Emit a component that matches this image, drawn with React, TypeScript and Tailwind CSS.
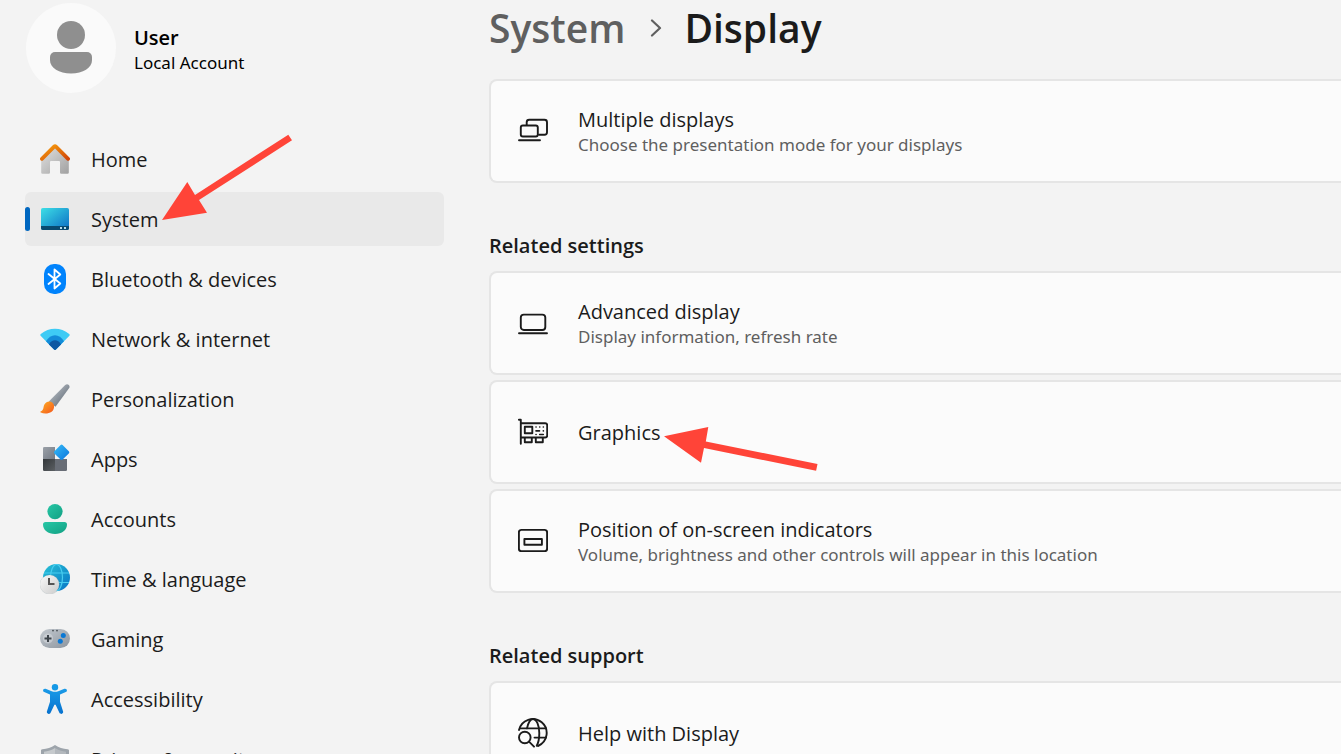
import type { ReactNode } from "react";

function HomeIcon() {
  return (
    <svg viewBox="0 0 30 30" className="size-[30px] shrink-0" aria-hidden="true">
      <defs>
        <linearGradient id="homeWall" x1="0" y1="0" x2="1" y2="1">
          <stop offset="0" stopColor="#e2e2e2" />
          <stop offset="1" stopColor="#a0a0a0" />
        </linearGradient>
        <linearGradient id="homeRoof" x1="0" y1="0" x2="1" y2="1">
          <stop offset="0" stopColor="#f8a00c" />
          <stop offset="1" stopColor="#d04408" />
        </linearGradient>
      </defs>
      <path d="M15 3 1.2 15.5v13a1.3 1.3 0 0 0 1.3 1.3h6.2A1.3 1.3 0 0 0 10 28.5V18a1 1 0 0 1 1-1h8a1 1 0 0 1 1 1v10.5a1.3 1.3 0 0 0 1.3 1.3h6.2a1.3 1.3 0 0 0 1.3-1.3v-13Z" fill="url(#homeWall)" />
      <path d="M1.9 14.8 14.1 2.7a1.3 1.3 0 0 1 1.8 0L28.1 14.8" fill="none" stroke="url(#homeRoof)" strokeWidth="3.8" strokeLinecap="round" />
    </svg>
  );
}

function SystemIcon() {
  return (
    <svg viewBox="0 0 30 30" className="size-[30px] shrink-0" aria-hidden="true">
      <defs>
        <linearGradient id="screen" x1="0" y1="0" x2="1" y2="1">
          <stop offset="0" stopColor="#3ddfe6" />
          <stop offset="1" stopColor="#0b6cc4" />
        </linearGradient>
      </defs>
      <rect x="1" y="4" width="28" height="22" rx="1.8" fill="url(#screen)" />
      <path d="M1 22h28v2.2a1.8 1.8 0 0 1-1.8 1.8H2.8A1.8 1.8 0 0 1 1 24.2Z" fill="#084a70" />
      <path d="M20 23h2v2h-2zM24 23h2v2h-2z" fill="#b8dcea" />
    </svg>
  );
}

function BluetoothIcon() {
  return (
    <svg viewBox="0 0 30 30" className="size-[30px] shrink-0" aria-hidden="true">
      <rect x="4" y="0" width="22" height="30" rx="10" fill="#0083fc" />
      <path d="M8.5 10 20.3 19.5 14.5 24.5V5.5L20.3 10.5 8.5 20" fill="none" stroke="#fff" strokeWidth="1.8" strokeLinecap="round" strokeLinejoin="round" />
    </svg>
  );
}

function NetworkIcon() {
  return (
    <svg viewBox="0 0 30 30" className="size-[30px] shrink-0" aria-hidden="true">
      <path d="M.6 11.8C.1 11.3.2 10.6.8 10.1c8.2-7.2 20.2-7.2 28.4 0 .6.5.7 1.2.2 1.7L15.9 25.6q-.9.9-1.8 0Z" fill="#3ecbf5" />
      <path d="M6 17.3c4.600-8 13.400-8 18 0l-8.100 8.300q-.9.9-1.8 0Z" fill="#138bd8" />
      <path d="M9 20.4c3-5.4 9-5.4 12 0l-5.1 5.2q-.9.9-1.8 0Z" fill="#0c57a2" />
    </svg>
  );
}

function BrushIcon() {
  return (
    <svg viewBox="0 0 30 30" className="size-[30px] shrink-0" aria-hidden="true">
      <defs>
        <linearGradient id="brushHandle" x1="0" y1="0" x2="1" y2="1">
          <stop offset=".2" stopColor="#b3b9c0" />
          <stop offset=".8" stopColor="#68727d" />
        </linearGradient>
        <linearGradient id="brushTip" x1="0" y1="0" x2="1" y2="1">
          <stop offset="0" stopColor="#fdb022" />
          <stop offset="1" stopColor="#f4561e" />
        </linearGradient>
      </defs>
      <path d="M25.2.9c2.4-1.9 5.4.5 4 3.2L15.5 22.8 8.8 17.6Z" fill="url(#brushHandle)" />
      <path d="M4.4 20.5c2-3.6 6.2-3.7 8.3-1.5 2.3 2.4 1.6 6.8-1.1 8.800-3 2.1-7.8 2.2-10.800.8-.8-.4-.5-1 .2-1.3 3-1.2 2-4.3 3.4-6.8Z" fill="url(#brushTip)" />
    </svg>
  );
}

function AppsIcon() {
  return (
    <svg viewBox="0 0 30 30" className="size-[30px] shrink-0" aria-hidden="true">
      <defs>
        <linearGradient id="appsDark" x1="0" y1="0" x2="1" y2="1">
          <stop offset="0" stopColor="#33373a" />
          <stop offset="1" stopColor="#5b5f63" />
        </linearGradient>
        <linearGradient id="appsLight" x1="0" y1="0" x2="1" y2="1">
          <stop offset="0" stopColor="#9aa0a8" />
          <stop offset="1" stopColor="#747a83" />
        </linearGradient>
        <linearGradient id="appsBlue" x1="0" y1="0" x2="1" y2="1">
          <stop offset="0" stopColor="#36bdf8" />
          <stop offset="1" stopColor="#0a74dc" />
        </linearGradient>
      </defs>
      <path d="M4.3 3H15v12H3V4.3A1.3 1.3 0 0 1 4.3 3Z" fill="url(#appsLight)" />
      <path d="M3 15h12v12H4.3A1.3 1.3 0 0 1 3 25.7Z" fill="url(#appsDark)" />
      <path d="M15 15h12v10.7a1.3 1.3 0 0 1-1.3 1.3H15Z" fill="#686d76" />
      <path d="m22.6 1 6.2 6.2q1.1 1.1 0 2.2l-6.2 6.2q-1 1-2 0l-6.2-6.2q-1.1-1.1 0-2.2L20.6 1q1-1 2 0Z" fill="url(#appsBlue)" />
    </svg>
  );
}

function AccountsIcon() {
  return (
    <svg viewBox="0 0 30 30" className="size-[30px] shrink-0" aria-hidden="true">
      <defs>
        <linearGradient id="person" x1="0" y1="0" x2="1" y2="1">
          <stop offset="0" stopColor="#27c7a6" />
          <stop offset="1" stopColor="#12a083" />
        </linearGradient>
      </defs>
      <circle cx="15" cy="7.6" r="7.6" fill="url(#person)" />
      <path d="M5.5 18h19a2.5 2.5 0 0 1 2.5 2.5C27 26 22 30 15 30S3 26 3 20.5A2.5 2.5 0 0 1 5.5 18Z" fill="url(#person)" />
    </svg>
  );
}

function TimeIcon() {
  return (
    <svg viewBox="0 0 30 30" className="size-[30px] shrink-0" aria-hidden="true">
      <defs>
        <linearGradient id="globe" x1="0" y1="0" x2="1" y2="1">
          <stop offset="0" stopColor="#29c3d6" />
          <stop offset="1" stopColor="#0673c5" />
        </linearGradient>
        <linearGradient id="clock" x1="0" y1="0" x2="1" y2="1">
          <stop offset="0" stopColor="#fafafa" />
          <stop offset="1" stopColor="#cbcbcb" />
        </linearGradient>
      </defs>
      <circle cx="16.5" cy="13.5" r="13.5" fill="url(#globe)" />
      <g fill="none" stroke="#48cdf0" strokeWidth="1.2">
        <ellipse cx="16.5" cy="13.5" rx="6" ry="13.2" />
        <path d="M4 9h25M4 18.5h25" />
      </g>
      <circle cx="9.7" cy="20.5" r="10" fill="#8b9aa0" opacity=".35" />
      <circle cx="9.6" cy="20.4" r="9.5" fill="url(#clock)" />
      <path d="M9 14v6h5.5" fill="none" stroke="#555" strokeWidth="2" />
    </svg>
  );
}

function GamingIcon() {
  return (
    <svg viewBox="0 0 30 30" className="size-[30px] shrink-0" aria-hidden="true">
      <defs>
        <linearGradient id="pad" x1="0" y1="0" x2="1" y2="1">
          <stop offset="0" stopColor="#c3c9cf" />
          <stop offset="1" stopColor="#8d959e" />
        </linearGradient>
      </defs>
      <rect x="0" y="5" width="30" height="19" rx="9.5" fill="url(#pad)" />
      <circle cx="8" cy="14.4" r="5" fill="#d5d9dd" opacity=".6" />
      <path d="M8 10.9v7M4.5 14.4h7" stroke="#3e454b" strokeWidth="2" />
      <circle cx="13" cy="6.6" r=".9" fill="#454b51" />
      <circle cx="17" cy="6.6" r=".9" fill="#454b51" />
      <circle cx="23.3" cy="11.4" r="2.5" fill="#0a78d4" />
      <circle cx="20.3" cy="17.3" r="2.5" fill="#0a78d4" />
    </svg>
  );
}

function AccessibilityIcon() {
  return (
    <svg viewBox="0 0 30 30" className="size-[30px] shrink-0" aria-hidden="true">
      <defs>
        <linearGradient id="figure" x1="0" y1="0" x2="0" y2="1">
          <stop offset="0" stopColor="#1a9be8" />
          <stop offset="1" stopColor="#0671ce" />
        </linearGradient>
      </defs>
      <circle cx="15" cy="3.2" r="3.2" fill="#1599e6" />
      <path d="M5.6 4.8 11.7 7.2q3.3 1.1 6.6 0L24.4 4.8c2.3-.8 3.6 2.2 1.4 3.2L20 10.5v7.2l3.1 9.8c.6 2.3-2.7 3.4-3.7 1.2L15.7 21q-.7-1.2-1.4 0l-3.7 7.7c-1 2.2-4.3 1.1-3.7-1.2L10 17.7v-7.2L4.2 8C2 7 3.3 4 5.6 4.8Z" fill="url(#figure)" />
    </svg>
  );
}

function PrivacyIcon() {
  return (
    <svg viewBox="0 0 30 30" className="size-[30px] shrink-0" aria-hidden="true">
      <path d="M15 1c3.8 2.8 8 4 12.6 4.2.8 0 1.4.6 1.4 1.4V15c0 7-5 12-14 15C6 27 1 22 1 15V6.6c0-.8.6-1.4 1.4-1.4C7 5 11.2 3.8 15 1Z" fill="#9da4ab" />
      <path d="M15 4c3.3 2.2 7 3.4 11 3.8V15c0 5.5-4 9.5-11 12Z" fill="#b3b8bd" />
      <path d="M15 4C11.7 6.2 8 7.4 4 7.8V15c0 5.5 4 9.5 11 12Z" fill="#c6cacd" />
    </svg>
  );
}

// outline icons used inside the cards
function LineIcon({ children }: { children: ReactNode }) {
  return (
    <svg
      viewBox="0 0 30 30"
      className="size-[30px] shrink-0"
      fill="none"
      stroke="#1b1b1b"
      strokeWidth="1.9"
      strokeLinecap="round"
      strokeLinejoin="round"
      aria-hidden="true"
    >
      {children}
    </svg>
  );
}

function MultipleDisplaysIcon() {
  return (
    <LineIcon>
      <path d="M8.7 9V6.3a2.5 2.5 0 0 1 2.5-2.5h15.3A2.5 2.5 0 0 1 29 6.3v9.9a2.5 2.5 0 0 1-2.5 2.5H21" />
      <rect x="2.8" y="9.5" width="17" height="11" rx="2" />
      <path d="M1 24.3h21" />
    </LineIcon>
  );
}

function LaptopIcon() {
  return (
    <LineIcon>
      <rect x="2.8" y="6.6" width="24.5" height="15.4" rx="3" />
      <path d="M1 25.2h28" />
    </LineIcon>
  );
}

function GraphicsIcon() {
  return (
    <LineIcon>
      <path d="M.9 2.7h1.9v24M2.8 6.3h24.4a2 2 0 0 1 2 2v10.2a2 2 0 0 1-2 2H2.8" />
      <rect x="6.8" y="9.8" width="7.5" height="6.5" />
      <path d="M6.8 21v4.3h7V21M17.8 21v4.3h7V21" />
      <path d="M18 10h.1M21.7 10h.1M25.3 10h.1M18 13.9h3.5M25.3 13.9h.1M18 17.5h.1M21.7 17.5h3.6" strokeWidth="1.6" />
    </LineIcon>
  );
}

function IndicatorsIcon() {
  return (
    <LineIcon>
      <rect x=".9" y="3.9" width="28.2" height="21.2" rx="2.5" />
      <rect x="6.4" y="13" width="17.5" height="5.8" />
    </LineIcon>
  );
}

function HelpIcon() {
  return (
    <LineIcon>
      <path d="M1 12A14 14 0 1 1 20 28" />
      <path d="M2 10.4h26M16.5 19.6h11.5" />
      <path d="M9 10.4C10.3 4.5 12.5 1 15 1c3.5 0 6.3 6.5 6.3 14 0 5.5-1 10-2.6 12.7" />
      <circle cx="6.8" cy="19.5" r="5.8" />
      <path d="m11 23.7 5 5" />
    </LineIcon>
  );
}

const navItems = [
  { label: "Home", icon: <HomeIcon /> },
  { label: "System", icon: <SystemIcon />, active: true },
  { label: "Bluetooth & devices", icon: <BluetoothIcon /> },
  { label: "Network & internet", icon: <NetworkIcon /> },
  { label: "Personalization", icon: <BrushIcon /> },
  { label: "Apps", icon: <AppsIcon /> },
  { label: "Accounts", icon: <AccountsIcon /> },
  { label: "Time & language", icon: <TimeIcon /> },
  { label: "Gaming", icon: <GamingIcon /> },
  { label: "Accessibility", icon: <AccessibilityIcon /> },
  { label: "Privacy & security", icon: <PrivacyIcon /> },
];

function Sidebar() {
  return (
    <aside className="w-[419px] shrink-0">
      <button type="button" className="mt-[3px] ml-px flex items-center gap-[18px] text-left text-black">
        <svg viewBox="0 0 90 90" className="size-[90px]" aria-hidden="true">
          <circle cx="45" cy="45" r="45" fill="#fafafa" />
          <circle cx="45" cy="32" r="14" fill="#8f8f8f" />
          <path d="M29 49h32a5 5 0 0 1 5 5v3c0 8-9 13.5-21 13.5S24 65 24 57v-3a5 5 0 0 1 5-5Z" fill="#8f8f8f" />
        </svg>
        <span className="flex flex-col pt-1">
          <span className="text-[20px] leading-[26px] font-semibold">User</span>
          <span className="font-['Noto_Sans',sans-serif] text-[17px] leading-[24px]">Local Account</span>
        </span>
      </button>

      <nav className="mt-[39px] flex flex-col gap-[6px]">
        {navItems.map((item) => (
          <a
            key={item.label}
            href="#"
            aria-current={item.active ? "page" : undefined}
            className={
              item.active
                ? "relative flex h-[54px] items-center gap-[21px] rounded-md bg-[#e9e9e9] pl-[15px]"
                : "flex h-[54px] items-center gap-[21px] rounded-md pl-[15px]"
            }
          >
            {item.active && (
              <span className="absolute top-[15px] left-0 h-6 w-[5px] rounded-full bg-[#0067c0]" />
            )}
            {item.icon}
            <span className="pt-[2px] text-[20px] leading-[28px]">{item.label}</span>
            {item.active && (
              <svg
                viewBox="0 0 130 86"
                className="pointer-events-none absolute top-[-58px] left-[137px] h-[86px] w-[130px]"
                aria-hidden="true"
              >
                <path d="M0 86 25.3 48l7.7 13L126.3.7l3.7 5.6L37 66l8 12.7Z" fill="#ff4438" />
              </svg>
            )}
          </a>
        ))}
      </nav>
    </aside>
  );
}

type CardProps = {
  icon: ReactNode;
  title: string;
  description?: string;
  children?: ReactNode;
};

function Card({ icon, title, description, children }: CardProps) {
  return (
    <button
      type="button"
      className="relative flex h-[104px] w-full items-center gap-[30px] rounded-l-lg border-2 border-r-0 border-[#e5e5e5] bg-[#fbfbfb] pl-[27px] text-left"
    >
      {icon}
      <span className="flex flex-col pt-[2px]">
        <span className="text-[20px] leading-[26px]">{title}</span>
        {description && (
          <span className="font-['Noto_Sans',sans-serif] text-[17px] leading-[24px] text-[#5f5f5f]">
            {description}
          </span>
        )}
      </span>
      {children}
    </button>
  );
}

function App() {
  return (
    <div className="flex h-screen overflow-hidden bg-[#f3f3f3] pl-[25px] font-['Open_Sans','Noto_Sans',sans-serif] text-[#1b1b1b]">
      <Sidebar />

      <main className="ml-[45px] min-w-0 flex-1">
        <h1 className="flex h-[79px] items-start text-[39px] leading-[56px] font-semibold">
          <a href="#" className="text-[#5f5f5f]">System</a>
          <svg viewBox="0 0 12 18" className="mt-[19px] mr-[22px] ml-[25px] h-[18px] w-3" fill="none" stroke="#5f5f5f" strokeWidth="2.2" strokeLinecap="round" strokeLinejoin="round" aria-hidden="true">
            <path d="m2 1.5 8 7.5-8 7.5" />
          </svg>
          <span>Display</span>
        </h1>

        <Card
          icon={<MultipleDisplaysIcon />}
          title="Multiple displays"
          description="Choose the presentation mode for your displays"
        />

        <h2 className="mt-[49px] mb-[11px] text-[20px] leading-[28px] font-semibold">Related settings</h2>
        <div className="flex flex-col gap-[5px]">
          <Card
            icon={<LaptopIcon />}
            title="Advanced display"
            description="Display information, refresh rate"
          />
          <Card icon={<GraphicsIcon />} title="Graphics">
            <svg
              viewBox="0 0 154 44"
              className="pointer-events-none absolute top-[45px] left-[173px] h-[44px] w-[154px]"
              aria-hidden="true"
            >
              <path d="M0 9.3 44.3 0l-2.5 14.5L153.5 37l-1.4 6.8L40 21l-3 14.7Z" fill="#ff4438" />
            </svg>
          </Card>
          <Card
            icon={<IndicatorsIcon />}
            title="Position of on-screen indicators"
            description="Volume, brightness and other controls will appear in this location"
          />
        </div>

        <h2 className="mt-[49px] mb-[11px] text-[20px] leading-[28px] font-semibold">Related support</h2>
        <Card icon={<HelpIcon />} title="Help with Display" />
      </main>
    </div>
  );
}

export default App;
